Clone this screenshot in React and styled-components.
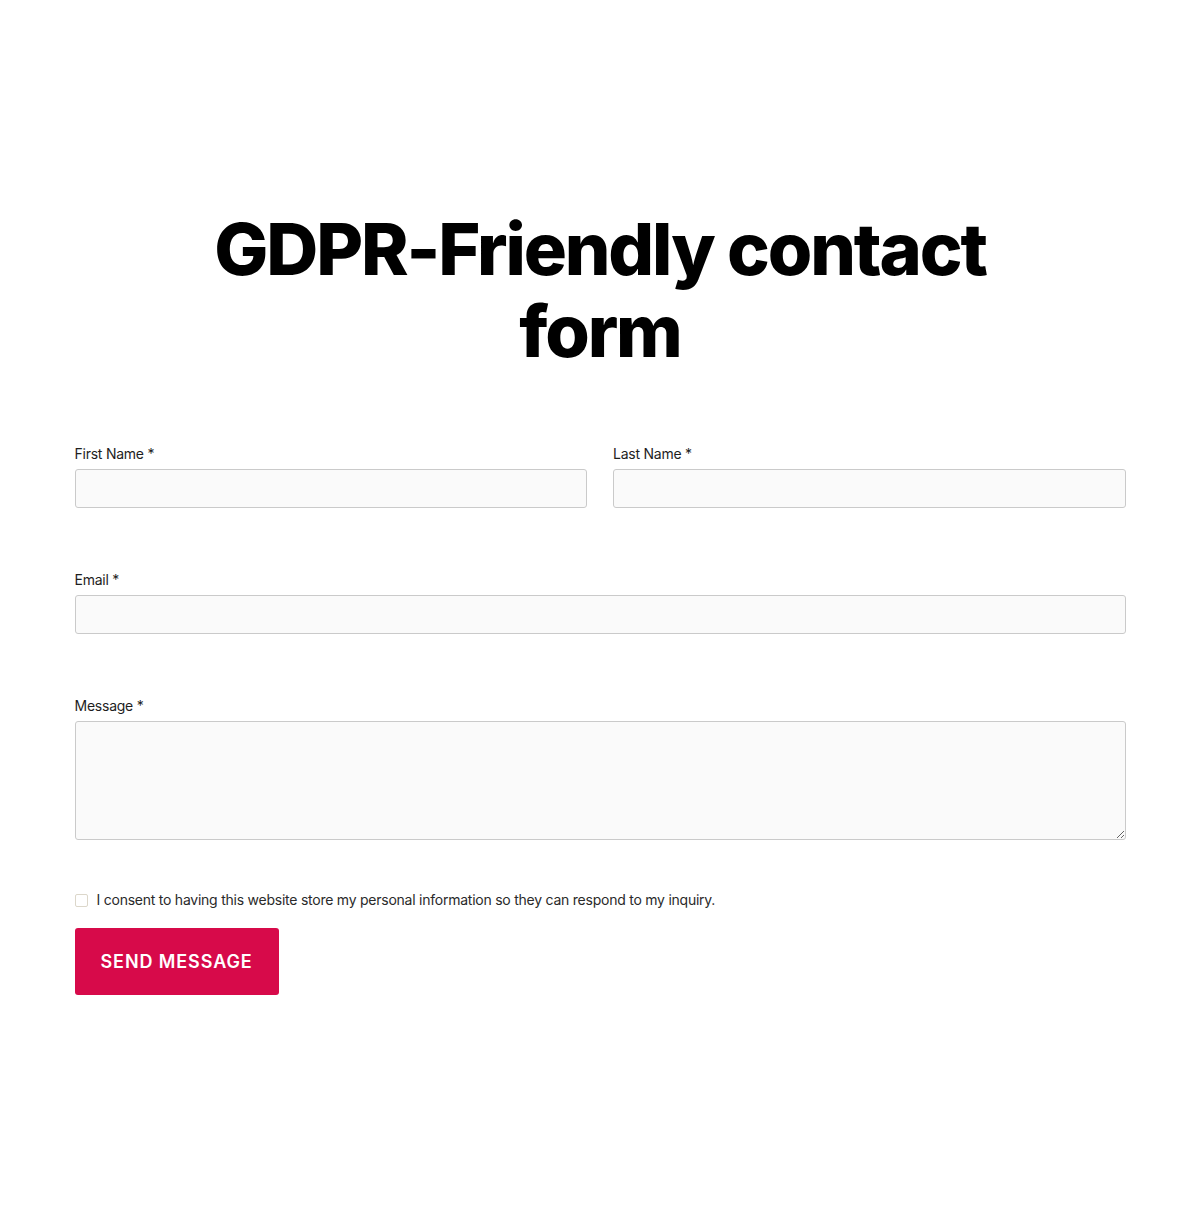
import * as React from 'react';
import styled, { createGlobalStyle } from 'styled-components';

const GlobalStyle = createGlobalStyle`
  html, body {
    margin: 0;
    padding: 0;
    background: #ffffff;
  }
  body {
    font-family: Inter, "Noto Sans", "Liberation Sans", sans-serif;
    color: #000;
    letter-spacing: -0.015em;
  }
`;

const Page = styled.main`
  padding: 208px 0 120px;
`;

const Title = styled.h1`
  margin: 0 auto;
  max-width: 840px;
  font-size: 72px;
  line-height: 82px;
  font-weight: 800;
  letter-spacing: -0.03em;
  text-align: center;
  color: #000;
`;

const Form = styled.form`
  width: 1051px;
  margin: 72px auto 0;
  display: flex;
  flex-direction: column;
  gap: 62px;
`;

const Row = styled.div`
  display: grid;
  grid-template-columns: 1fr 1fr;
  column-gap: 26px;
`;

const Field = styled.div`
  display: flex;
  flex-direction: column;
`;

const Label = styled.label`
  font-size: 14px;
  line-height: 20px;
  color: #1e1e1e;
  margin-bottom: 5px;
`;

const Input = styled.input`
  box-sizing: border-box;
  height: 39px;
  width: 100%;
  background: #fafafa;
  border: 1px solid #cacaca;
  border-radius: 3px;
  font: inherit;
  padding: 0 12px;
  outline: none;
`;

const TextArea = styled.textarea`
  box-sizing: border-box;
  height: 119px;
  width: 100%;
  background: #fafafa;
  border: 1px solid #cacaca;
  border-radius: 3px;
  font: inherit;
  padding: 10px 12px;
  outline: none;
  display: block;
`;

const Footer = styled.div`
  display: flex;
  flex-direction: column;
  align-items: flex-start;
  gap: 18px;
  margin-top: -12px;
`;

const Consent = styled.label`
  display: flex;
  align-items: center;
  gap: 9px;
  font-size: 14px;
  line-height: 20px;
  color: #2a2a2a;
`;

const Box = styled.span`
  box-sizing: border-box;
  width: 13px;
  height: 13px;
  border: 1px solid #dcd7ca;
  border-radius: 2px;
  background: #fff;
`;

const Button = styled.button`
  box-sizing: border-box;
  height: 67px;
  padding: 0 26px;
  background: #d70a4a;
  color: #fff;
  border: none;
  border-radius: 3px;
  font-family: inherit;
  font-size: 18px;
  font-weight: 600;
  letter-spacing: 0.05em;
  text-transform: uppercase;
  cursor: pointer;
`;

export default function App() {
  return (
    <>
      <GlobalStyle />
      <Page>
        <Title>GDPR-Friendly contact form</Title>
        <Form onSubmit={(e) => e.preventDefault()}>
          <Row>
            <Field>
              <Label>First Name *</Label>
              <Input type="text" />
            </Field>
            <Field>
              <Label>Last Name *</Label>
              <Input type="text" />
            </Field>
          </Row>
          <Field>
            <Label>Email *</Label>
            <Input type="email" />
          </Field>
          <Field>
            <Label>Message *</Label>
            <TextArea />
          </Field>
          <Footer>
            <Consent>
              <Box />
              I consent to having this website store my personal information so they can respond to my inquiry.
            </Consent>
            <Button type="submit">Send Message</Button>
          </Footer>
        </Form>
      </Page>
    </>
  );
}
